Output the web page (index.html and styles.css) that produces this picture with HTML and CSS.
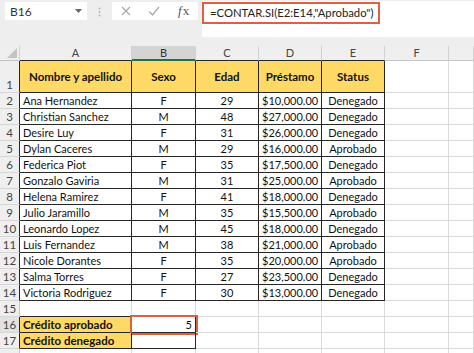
FILE: index.html
```html
<!DOCTYPE html>
<html lang="es">
<head>
    <meta charset="UTF-8">
    <meta name="viewport" content="width=device-width, initial-scale=1.0">
    <title>Créditos</title>
    <link rel="stylesheet" href="styles.css">
</head>
<body>

<!-- Formula bar -->
<div class="toolbar">
    <div class="namebox">
        <span>B16</span>
        <svg width="7" height="4" viewBox="0 0 7 4"><polygon points="0,0 7,0 3.5,4" fill="#666"/></svg>
    </div>
    <div class="grip">
        <svg width="3" height="10" viewBox="0 0 3 10">
            <circle cx="1.5" cy="1.5" r="1" fill="#b5b5b5"/>
            <circle cx="1.5" cy="5" r="1" fill="#b5b5b5"/>
            <circle cx="1.5" cy="8.5" r="1" fill="#b5b5b5"/>
        </svg>
    </div>
    <div class="fnbox">
        <svg width="10" height="10" viewBox="0 0 10 10"><path d="M1 1L9 9M9 1L1 9" stroke="#a8a8a8" stroke-width="1.2" fill="none"/></svg>
        <svg width="12" height="10" viewBox="0 0 12 10"><path d="M1 5.5L4.5 9L11 1" stroke="#a8a8a8" stroke-width="1.2" fill="none"/></svg>
        <span class="fx"><i>f</i>x</span>
    </div>
    <div class="formula">
        <span class="formula-text">=CONTAR.SI(E2:E14,"Aprobado")</span>
    </div>
</div>

<!-- Sheet -->
<div class="sheet">
    <div class="row colhead">
        <div class="corner"><svg width="12" height="11" viewBox="0 0 12 11"><polygon points="11,0 11,10 1,10" fill="#c4c4c4"/></svg></div>
        <div class="top">A</div>
        <div class="sel">B</div>
        <div class="top">C</div>
        <div class="top">D</div>
        <div class="top">E</div>
        <div>F</div>
        <div></div>
    </div>

    <div class="row tall">
        <div class="n edge">1</div>
        <div class="d h">Nombre y apellido</div>
        <div class="d h">Sexo</div>
        <div class="d h">Edad</div>
        <div class="d h">Préstamo</div>
        <div class="d h">Status</div>
        <div></div><div></div>
    </div>

    <div class="row">
        <div class="n edge">2</div>
        <div class="d">Ana Hernandez</div><div class="d ctr">F</div><div class="d ctr">29</div>
        <div class="d money"><span>$</span><span>10,000.00</span></div><div class="d ctr">Denegado</div>
        <div></div><div></div>
    </div>
    <div class="row">
        <div class="n edge">3</div>
        <div class="d">Christian Sanchez</div><div class="d ctr">M</div><div class="d ctr">48</div>
        <div class="d money"><span>$</span><span>27,000.00</span></div><div class="d ctr">Denegado</div>
        <div></div><div></div>
    </div>
    <div class="row">
        <div class="n edge">4</div>
        <div class="d">Desire Luy</div><div class="d ctr">F</div><div class="d ctr">31</div>
        <div class="d money"><span>$</span><span>26,000.00</span></div><div class="d ctr">Denegado</div>
        <div></div><div></div>
    </div>
    <div class="row">
        <div class="n edge">5</div>
        <div class="d">Dylan Caceres</div><div class="d ctr">M</div><div class="d ctr">29</div>
        <div class="d money"><span>$</span><span>16,000.00</span></div><div class="d ctr">Aprobado</div>
        <div></div><div></div>
    </div>
    <div class="row">
        <div class="n edge">6</div>
        <div class="d">Federica Piot</div><div class="d ctr">F</div><div class="d ctr">35</div>
        <div class="d money"><span>$</span><span>17,500.00</span></div><div class="d ctr">Denegado</div>
        <div></div><div></div>
    </div>
    <div class="row">
        <div class="n edge">7</div>
        <div class="d">Gonzalo Gaviria</div><div class="d ctr">M</div><div class="d ctr">31</div>
        <div class="d money"><span>$</span><span>25,000.00</span></div><div class="d ctr">Aprobado</div>
        <div></div><div></div>
    </div>
    <div class="row">
        <div class="n edge">8</div>
        <div class="d">Helena Ramirez</div><div class="d ctr">F</div><div class="d ctr">41</div>
        <div class="d money"><span>$</span><span>18,000.00</span></div><div class="d ctr">Denegado</div>
        <div></div><div></div>
    </div>
    <div class="row">
        <div class="n edge">9</div>
        <div class="d">Julio Jaramillo</div><div class="d ctr">M</div><div class="d ctr">35</div>
        <div class="d money"><span>$</span><span>15,500.00</span></div><div class="d ctr">Aprobado</div>
        <div></div><div></div>
    </div>
    <div class="row">
        <div class="n edge">10</div>
        <div class="d">Leonardo Lopez</div><div class="d ctr">M</div><div class="d ctr">45</div>
        <div class="d money"><span>$</span><span>18,000.00</span></div><div class="d ctr">Denegado</div>
        <div></div><div></div>
    </div>
    <div class="row">
        <div class="n edge">11</div>
        <div class="d">Luis Fernandez</div><div class="d ctr">M</div><div class="d ctr">38</div>
        <div class="d money"><span>$</span><span>21,000.00</span></div><div class="d ctr">Aprobado</div>
        <div></div><div></div>
    </div>
    <div class="row">
        <div class="n edge">12</div>
        <div class="d">Nicole Dorantes</div><div class="d ctr">F</div><div class="d ctr">35</div>
        <div class="d money"><span>$</span><span>20,000.00</span></div><div class="d ctr">Aprobado</div>
        <div></div><div></div>
    </div>
    <div class="row">
        <div class="n edge">13</div>
        <div class="d">Salma Torres</div><div class="d ctr">F</div><div class="d ctr">27</div>
        <div class="d money"><span>$</span><span>23,500.00</span></div><div class="d ctr">Denegado</div>
        <div></div><div></div>
    </div>
    <div class="row">
        <div class="n edge">14</div>
        <div class="d">Victoria Rodriguez</div><div class="d ctr">F</div><div class="d ctr">30</div>
        <div class="d money"><span>$</span><span>13,000.00</span></div><div class="d ctr">Denegado</div>
        <div></div><div></div>
    </div>

    <div class="row">
        <div class="n">15</div>
        <div class="bb"></div><div class="bb"></div>
        <div></div><div></div><div></div><div></div><div></div>
    </div>
    <div class="row">
        <div class="n edge selrow">16</div>
        <div class="d label">Crédito aprobado</div>
        <div class="d rt active">5</div>
        <div></div><div></div><div></div><div></div><div></div>
    </div>
    <div class="row">
        <div class="n edge">17</div>
        <div class="d label">Crédito denegado</div>
        <div class="d"></div>
        <div></div><div></div><div></div><div></div><div></div>
    </div>
    <div class="row">
        <div class="n"></div>
        <div></div><div></div><div></div><div></div><div></div><div></div><div></div>
    </div>
</div>

</body>
</html>
```

FILE: styles.css
```css
body {
    margin: 0;
    font-family: Lato, "Liberation Sans", sans-serif;
    background: #fff;
    overflow: hidden;
}

/* formula bar */
.toolbar {
    display: flex;
    align-items: flex-start;
    height: 46px;
    background: #eeeeee;
}
.namebox {
    box-sizing: border-box;
    width: 82px;
    height: 18px;
    margin: 2px 0 0 5px;
    padding: 0 5px 0 5px;
    background: #fff;
    display: flex;
    align-items: center;
    justify-content: space-between;
    font-size: 12px;
    color: #333;
}
.grip {
    width: 25px;
    display: flex;
    justify-content: center;
    padding-top: 7px;
}
.fnbox {
    width: 86px;
    height: 18px;
    margin-top: 2px;
    background: #fff;
    display: flex;
    align-items: center;
    justify-content: space-around;
}
.fx {
    font-family: "Liberation Serif", serif;
    font-size: 13px;
    color: #555;
}
.fx i {
    margin-right: 1px;
}
.formula {
    flex: 1;
    height: 36px;
    margin: 1px 0 0 4px;
    background: #fff;
}
.formula-text {
    display: inline-block;
    box-sizing: border-box;
    height: 22px;
    padding: 0 4px 0 6px;
    border: 2px solid #e0603e;
    font-size: 11.3px;
    line-height: 18px;
    color: #222;
}

/* sheet grid */
.row {
    display: grid;
    grid-template-columns: 20px 112px 64px 63px 63px 63px 64px 1fr;
    height: 16px;
}
.row > div {
    box-sizing: border-box;
    border-right: 1px solid #dadada;
    border-bottom: 1px solid #dadada;
    padding: 0 3px;
    font-size: 11px;
    line-height: 15px;
    white-space: nowrap;
    overflow: hidden;
    color: #111;
}
.row > .d {
    border-color: #262626;
}
.row > .bb {
    border-bottom-color: #262626;
}

.colhead {
    height: 15px;
}
.colhead > div {
    background: #efefef;
    text-align: center;
    color: #444;
    border-right-color: #d2d2d2;
    border-bottom-color: #c4c4c4;
    line-height: 14px;
}
.colhead > .corner {
    padding: 2px 0 0 6px;
    text-align: left;
    line-height: 0;
}
.colhead > .top {
    border-bottom-color: #262626;
}
.colhead > .sel {
    background: #d4d4d4;
    border-bottom: 2px solid #217346;
    color: #333;
}

.row > .n {
    padding: 0;
    background: #efefef;
    text-align: center;
    color: #444;
    font-size: 11.5px;
    border-right-color: #c4c4c4;
    border-bottom-color: #d6d6d6;
}
.row > .n.edge {
    border-right-color: #262626;
}
.row > .n.selrow {
    background: #e2e2e2;
}

.tall {
    height: 32px;
}
.tall > .n {
    line-height: 47px;
}
.row > .h {
    background: #ffd966;
    font-weight: bold;
    font-size: 11.5px;
    text-align: center;
    line-height: 31px;
}
.row > .label {
    background: #ffd966;
    font-weight: bold;
    font-size: 11.5px;
}
.ctr {
    text-align: center;
}
.rt {
    text-align: right;
}
.row > .money {
    display: flex;
    justify-content: space-between;
    padding: 0 4px 0 3px;
}
.active {
    outline: 2px solid #e0603e;
    outline-offset: 0;
}
```
